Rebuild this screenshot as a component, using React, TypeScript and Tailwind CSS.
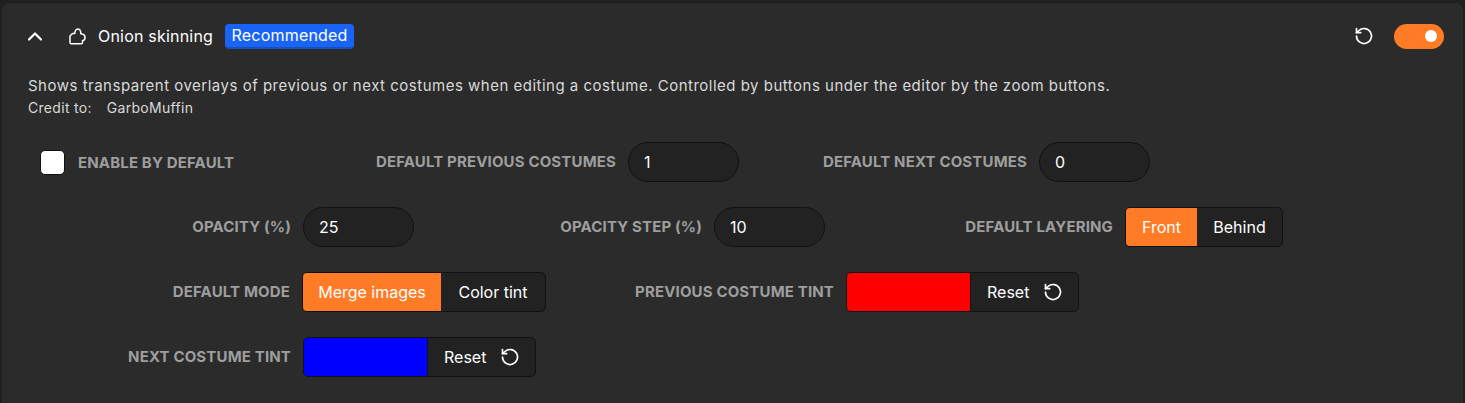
import { ReactNode } from 'react'

const FONT = "font-['Inter',sans-serif]"

const ResetIcon = ({ className }: { className: string }) => (
    <svg viewBox="0 0 24 24" fill="none" stroke="currentColor" strokeWidth="2" strokeLinecap="round" strokeLinejoin="round" className={className}>
        <path d="M3 12a9 9 0 1 0 2.9-6.6L3 8" />
        <path d="M3 3v5h5" />
    </svg>
)

const Label = ({ children }: { children: ReactNode }) => (
    <span className="whitespace-nowrap text-[15px] font-bold uppercase tracking-[0.15px] text-[#9e9e9e]">{children}</span>
)

const NumberField = ({ value }: { value: string }) => (
    <div className="flex h-10 w-[111px] items-center rounded-full border border-[#111] bg-[#222] pl-[15px] text-[16px] text-white">
        {value}
    </div>
)

const Setting = ({ label, width, children }: { label: string; width: string; children: ReactNode }) => (
    <div className={`flex items-center justify-end gap-[12px] ${width}`}>
        <Label>{label}</Label>
        {children}
    </div>
)

const Segments = ({ items }: { items: { text: string; width: string; on?: boolean }[] }) => (
    <div className="flex h-10 overflow-hidden rounded-[5px] border border-[#111] bg-[#222]">
        {items.map((item) => (
            <div
                key={item.text}
                className={`flex items-center justify-center text-[16px] text-white ${item.width} ${item.on ? 'bg-[#ff7b26]' : ''}`}
            >
                {item.text}
            </div>
        ))}
    </div>
)

const ColorField = ({ color }: { color: string }) => (
    <div className="flex h-10 overflow-hidden rounded-[5px] border border-[#111] bg-[#222]">
        <div className={`w-[124px] border-r border-[#111] ${color}`} />
        <div className="flex w-[107px] items-center pl-[16px] text-[16px] text-white">
            Reset
            <ResetIcon className="ml-[14px] size-[20px]" />
        </div>
    </div>
)

const App = () => {
    return (
        <div className={`h-[403px] w-[1465px] overflow-hidden bg-[#202020] pl-[2px] pt-[3px] ${FONT}`}>
            <div className="h-[420px] w-[1461px] rounded-[8px] bg-[#2b2b2b]">
                <div className="flex h-[66px] items-center pl-[26px] pr-[19px]">
                    <svg viewBox="0 0 14 9" fill="none" stroke="white" strokeWidth="2.2" strokeLinecap="round" strokeLinejoin="round" className="h-[9px] w-[14px]">
                        <path d="M1 7.500 7 1.500l6 6" />
                    </svg>
                    <svg viewBox="0 0 18 18" fill="none" stroke="white" strokeWidth="1.5" strokeLinejoin="round" className="ml-[26px] size-[18px]">
                        <path d="M2 15.500V9L4.500 6.500H6.800C6.600 4 8 2 10 2S13 4 12.700 6.500L14 7C16 7.200 17 9 17 10.500S16 13.500 14.500 13.800V15.500C14.500 16.300 14 16.800 13.200 16.800H3.200C2.500 16.800 2 16.300 2 15.500Z" />
                    </svg>
                    <span className="ml-[12px] text-[16px] tracking-[0.2px] text-white">Onion skinning</span>
                    <span className="ml-[12px] flex h-[25px] w-[129px] items-center justify-center rounded-[4px] border-b-2 border-[#1450c0] bg-[#1a64f5] text-[16px] tracking-[0.2px] text-white">
                        Recommended
                    </span>
                    <ResetIcon className="ml-auto size-[20px] text-white" />
                    <div className="ml-[20px] flex h-[25px] w-[50px] items-center justify-end rounded-full bg-[#ff7b26] pr-[7px]">
                        <div className="size-[12px] rounded-full bg-white" />
                    </div>
                </div>
                <div className="pl-[26px] pt-[7px]">
                    <p className="text-[15px] leading-[20px] tracking-[0.5px] text-[#d9d9d9]">
                        Shows transparent overlays of previous or next costumes when editing a costume. Controlled by buttons under the editor by the zoom buttons.
                    </p>
                    <p className="mt-[2px] flex text-[14px] leading-[20px] tracking-[0.3px] text-[#d9d9d9]">
                        <span>Credit to:</span>
                        <span className="ml-[15px]">GarboMuffin</span>
                    </p>
                </div>
                <div className="mt-[24px] flex flex-col gap-[25px]">
                    <div className="flex h-10 items-center pl-[38px]">
                        <div className="size-[25px] rounded-[5px] border border-[#111] bg-white" />
                        <span className="ml-[13px] w-[154px]"><Label>Enable by default</Label></span>
                        <Setting label="Default previous costumes" width="ml-[140px] w-[367px]"><NumberField value="1" /></Setting>
                        <Setting label="Default next costumes" width="ml-[83px] w-[328px]"><NumberField value="0" /></Setting>
                    </div>
                    <div className="flex h-10 items-center">
                        <Setting label="Opacity (%)" width="w-[412px]"><NumberField value="25" /></Setting>
                        <Setting label="Opacity step (%)" width="w-[411px]"><NumberField value="10" /></Setting>
                        <Setting label="Default layering" width="w-[458px]">
                            <Segments items={[{ text: 'Front', width: 'w-[71px]', on: true }, { text: 'Behind', width: 'w-[85px]' }]} />
                        </Setting>
                    </div>
                    <div className="flex h-10 items-center">
                        <Setting label="Default mode" width="w-[544px]">
                            <Segments items={[{ text: 'Merge images', width: 'w-[138px]', on: true }, { text: 'Color tint', width: 'w-[104px]' }]} />
                        </Setting>
                        <Setting label="Previous costume tint" width="w-[533px]"><ColorField color="bg-[#ff0000]" /></Setting>
                    </div>
                    <div className="flex h-10 items-center">
                        <Setting label="Next costume tint" width="w-[534px]"><ColorField color="bg-[#0000ff]" /></Setting>
                    </div>
                </div>
            </div>
        </div>
    )
}

export default App
